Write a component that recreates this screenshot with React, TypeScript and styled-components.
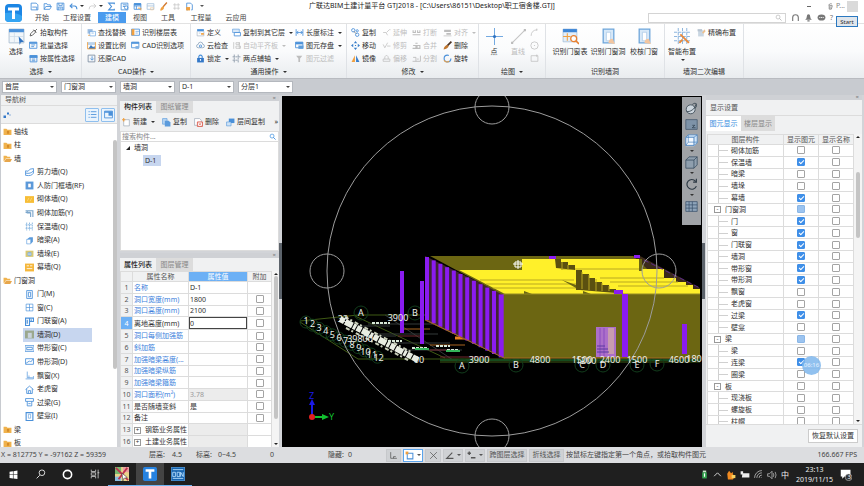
import React from 'react';
import styled, { createGlobalStyle, css } from 'styled-components';

const BLUE = '#4a90d9';
const ORANGE = '#f0a040';
const LINE = '#dcdcdc';

const GlobalStyle = createGlobalStyle`
  * { box-sizing: border-box; }
  html, body, #root { height: 100%; margin: 0; }
  body, button, input, select, table {
    font-family: "Noto Sans", "Noto Sans CJK SC", sans-serif;
    font-size: 7px;
    line-height: 10px;
    color: #303030;
  }
  body { overflow: hidden; }
  button { border: 0; padding: 0; margin: 0; background: none; }
  input { margin: 0; }
  p, h1, h2, ul { margin: 0; padding: 0; font-size: inherit; font-weight: normal; list-style: none; }
`;

/* ---------- icons ---------- */

const b = { fill: 'none', stroke: BLUE, strokeWidth: 1.5 };
const o = { fill: 'none', stroke: ORANGE, strokeWidth: 1.5 };
const g = { fill: 'none', stroke: 'currentColor', strokeWidth: 1.3 };

const glyphs: Record<string, React.ReactNode> = {
  newFile: <><path d="M2 7V2h9l3 3v9M2 7v7h12M4 9h8v5" {...b} /></>,
  open: <path d="M2 13V3h5l1 2h5v3M2 13l3-5h10l-3 5z" {...b} />,
  save: <path d="M2 2h12v12H2zM5 2v4h6V2M4 14V9h8v5M6 11h4" {...b} />,
  undo: <path d="M6 3 2 7l4 4M2 7h8q4 0 4 6" {...b} strokeWidth={2} />,
  redo: <path d="m10 3 4 4-4 4M14 7H6q-4 0-4 6" fill="none" stroke="#c8c8c8" strokeWidth="1.5" />,
  sigma: <path d="M13 4V2H3l5 6-5 6h10v-2" {...b} strokeWidth={2} />,
  stats: <><path d="M2 2v12h12V2zM5 5h7M5 8h4" {...b} /><circle cx="11" cy="10" r="3" {...b} /></>,
  sheet: <><path d="M2 3h12v10H2zM2 7h12M6 7v6" {...b} /><path d="M2 2h12v4H2z" fill={BLUE} /><path d="M9 11h5v4" {...o} /></>,
  sheetPale: <><path d="M2 3h12v10H2zM2 7h12" fill="none" stroke="#a9c3dc" strokeWidth="1.5" /><path d="M8 10h5v4H8z" fill="none" stroke="#edc79c" /></>,
  brush: <><path d="M14 1 7 9" stroke="#d07830" strokeWidth="2.5" /><path d="M8 8q-5 0-6 7 6 0 7-5z" fill={ORANGE} /></>,
  brushDark: <><path d="M15 1 7 9" stroke="#4a3020" strokeWidth="3" /><path d="M8 7q-6 1-7 8 8-1 9-6z" fill="#c0762e" /></>,
  grid: <path d="M2 5h12M2 11h12M5 2v12M11 2v12" fill="none" stroke="#b8b8b8" />,
  lockDoc: <><path d="M5 14H3V2h7l3 3v9h-2" {...b} /><path d="M2 9h7v6H2z" fill={ORANGE} /></>,
  picker: <path d="m2 14 1-4 6-6 3 3-6 6zM8 3l5 5M11 5l3-3" fill="none" stroke="#555" strokeWidth="1.6" />,
  batch: <><path d="M1 2h13v11H1zM4 7h7M4 10h5" {...b} /><path d="M1 2h13v3H1z" fill={BLUE} /></>,
  prop: <><path d="M2 3h12v11H2zM5 9h6M5 12h6" {...b} /><path d="M1 2h14v5H1z" fill={BLUE} /></>,
  find: <><path d="M1 2h9v8H1z" fill="#9bbce0" /><path d="M5 6h10v8H5zM8 9h4" fill="#fff" stroke={BLUE} /><path d="M2 13h3" {...o} /></>,
  scale: <><path d="M1 2h14v5H1z" fill="#b9d2ec" /><path d="m2 14 5-7 4 4 2-2 2 5z" fill="#3a78c0" /><path d="M1 2v12h14V2" {...o} /></>,
  restore: <><path d="M2 2h12v12H2z" fill="none" stroke="#7b8ca0" strokeWidth="1.5" /><path d="M9 4v6M6 8l3 3 3-3" {...b} /></>,
  floors: <><path d="M1 2h14v11H1z" {...b} /><path d="M1 2h5v11H1z" fill={ORANGE} /><path d="M8 6h6M8 9h4" stroke={BLUE} /></>,
  option: <><path d="M1 2h13v10H1z" {...b} /><path d="M1 2h13v3H1z" fill={BLUE} /><path d="M8 9h6v5H8z" fill="#7fb0e3" /></>,
  define: <><path d="M2 2h12v4H2z" fill={BLUE} /><path d="M2 6v8h12V6M5 9h3" fill="none" stroke="#9aa8b8" /><path d="M9 9h5v3H9z" fill={ORANGE} /></>,
  cloud: <><path d="M4 12a3 3 0 0 1 0-6 4 4 0 0 1 8 0 3 3 0 0 1 0 6z" fill="none" stroke="#92a8bf" strokeWidth="1.5" /><circle cx="8" cy="9" r="2" {...b} /></>,
  lock: <><path d="M5 7V4q3-4 6 0v3" {...b} strokeWidth={2} /><path d="M2 7h12v8H2z" fill="#3478c8" /><path d="M8 9v3" stroke="#fff" strokeWidth="2" /></>,
  copyLayer: <><path d="M1 2h12v6H1z" fill="#d8e8f8" stroke={BLUE} /><path d="M4 8h11v6H4z" fill="#fff" stroke={BLUE} strokeWidth="1.5" /></>,
  align: <path d="M3 2v12M7 3h6v3H7zM7 9h8v4H7zM13 2v12" {...g} />,
  axis: <path d="M4 1v14M11 1v14M1 5h14M1 11h9" fill="none" stroke="#8795a5" strokeWidth="1.5" strokeDasharray="4 1" />,
  length: <><path d="M2 2v12M14 2v12" {...b} /><path d="M3 8h10M6 5 3 8l3 3M10 5l3 3-3 3" {...b} /></>,
  store: <><path d="M1 2h13v10H1z" {...b} /><path d="M1 2h13v4H1z" fill={BLUE} /><path d="M6 8h9v6H6z" fill="#5d9ddc" /></>,
  filter: <path d="M2 3h11L9 8v6H6V8z" fill="currentColor" />,
  copy: <><circle cx="4" cy="4" r="3" {...b} /><circle cx="11" cy="5" r="2" {...b} /><circle cx="11" cy="12" r="3" {...b} /><path d="m5 6 4 4" stroke="#333" /></>,
  move: <path d="M8 0 5 4h6zM8 16l3-4H5zM0 8l4-3v6zM16 8l-4-3v6zM7 7h2v2H7z" fill="#3a7fca" />,
  mirror: <><path d="M7 2v12H1z" fill={ORANGE} /><path d="M9 2v12h6z" fill="#3a7fca" /></>,
  extend: <path d="M2 8h5l3 5M8 8l5-5h2" {...g} />,
  trim: <path d="M2 6l3 6 5-9M9 9h6" {...g} />,
  offset: <path d="M2 13h12v-4H2zM5 9V5l3-3 3 3v4" {...g} />,
  breakIt: <path d="M2 4v4h4V4M10 4v4h4V4M1 12h14" {...g} strokeWidth={2} />,
  merge: <path d="M1 13h14M2 8h5v5M9 13V8h5v5M6 4h4" {...g} strokeWidth={2} />,
  split: <path d="M1 13h14V3M2 6h5v7M9 9h3" {...g} strokeWidth={1.6} />,
  alignTo: <><path d="M2 3h12v4H2zM6 9h8v3H6z" fill="currentColor" /><path d="M1 14h14" {...g} /></>,
  rotate: <><circle cx="8" cy="8" r="6" {...b} strokeWidth={2} strokeDasharray="30 8" /><path d="M2 11a6 6 0 0 0 9 2" {...o} strokeWidth={2} /></>,
  exact: <><path d="M2 4h10v11H2z" fill="#c9d6e2" /><path d="M1 2h8v4H1z" fill="#b7c4d0" /><path d="m9 8 5-6 1 4-4 4z" fill="#eec08c" /></>,
  arc: <path d="M2 14Q2 4 13 3M12 1v4" {...g} />,
  circle: <><circle cx="8" cy="8" r="6.5" {...g} /><path d="M7 8h2" {...g} /></>,
  rect: <path d="M2 3h12v10H2zM12 1v4" {...g} />,
  list: <path d="M1 3h2M5 3h10M1 8h2M5 8h10M1 13h2M5 13h10" {...b} />,
  cards: <><path d="M1 2h14v12H1z" {...b} /><path d="M1 2h14v3H1zM8 5h7v5H8z" fill={BLUE} /></>,
  jump: <path d="M1 9h5v5H1zM8 3h4v4H8zM13 7h2v2h-2z" fill="#3478c8" />,
  folder: <><path d="M1 3h5l2 2h7v9H1z" fill="#f0b24d" /><path d="M7 7h4v5H7z" fill="#d58b28" /></>,
  folderOpen: <><path d="M1 3h5l2 2h5v3H5l-3 5H1z" fill="#f0b24d" /><path d="M5 9h11l-3 5H2z" fill="#e7a64b" /></>,
  shear: <path d="M1 5q5 3 8-3l6-1v8q-3 6-14 4zM1 9q9 2 14-4" {...b} />,
  frame: <><path d="M1 1h14v14H1z" fill="#5b9bdc" /><path d="M5 4h6v8H5z" fill="#fff" stroke="#3a78c0" /></>,
  brick: <><path d="M0 2h16v12H0z" fill="#f7bd35" /><path d="M4 11 7 5M9 11l3-6" stroke="#fbe2a0" /></>,
  rebar: <path d="M1 3h13v11M4 3v4h6v7M1 6h9" fill="none" stroke="#7ba6cc" strokeWidth="2" />,
  insul: <path d="M3 1v14M8 1v14M13 1v14M1 5h12M1 11h12" fill="none" stroke="#7aaede" strokeDasharray="3 1" strokeWidth="1.5" />,
  beam: <><path d="M3 6 8 2h6v8l-4 4V6z" fill="#5b9bdc" /><path d="M3 6h7v8H3z" fill="#fff" stroke={BLUE} /></>,
  stack: <><path d="M1 3h14v11H1z" fill="#d7c873" /><circle cx="8" cy="9" r="4" fill="#8fb6d6" /><path d="M5 9h6" stroke="#fff" /></>,
  curtain: <><path d="M0 1h16v14H0z" fill="#f5b73c" /><path d="M3 5h4M9 5h4M3 10h10" stroke="#fff" strokeWidth="1.5" /></>,
  door: <path d="M3 1h10v14H3zM6 4h4v8H6z" {...b} />,
  window: <path d="M2 2h12v12H2zM8 2v12M2 8h12" {...b} strokeWidth={1.2} />,
  doorWin: <path d="M1 2h7v13H1zM8 2h7v6H8M4 5v7M11 4v3" {...b} strokeWidth={2} />,
  hole: <><path d="M0 1h16v14H0z" fill="#9ba88e" /><path d="M5 5h7v9H5z" fill="#c9d3dd" /></>,
  band: <path d="M0 3h16v10H0zM3 6h10v4H3z" {...b} />,
  bandHole: <path d="M1 3h14v10H1zM2 11l6-4 2 2 5-6" {...b} />,
  bay: <path d="M4 1v11h10M1 14h14V9M7 12V8" {...b} strokeWidth={1.2} />,
  dormer: <path d="M1 8l7-6 7 6M3 7v8h10V7M6 15v-5h4v5" {...b} />,
  lintel: <path d="M1 1h14v5H1zM4 6v8h8V6M6 10h4" {...b} />,
  niche: <><path d="M2 1h12v14H2z" {...b} strokeWidth={2} /><path d="M6 4h4v7H6z" fill="none" stroke={BLUE} /></>,
  add: <><path d="M3 3h10v11H3z" fill="#fff" stroke="#8a98a8" /><path d="M0 3h6M3 0v6" stroke={ORANGE} strokeWidth="2" /></>,
  dup: <><path d="M1 1h8v10H1z" fill="#b9d6f2" stroke={BLUE} /><path d="M5 5h7l3 3v7H5z" fill="#5b9bdc" /></>,
  del: <><path d="M1 1h9l3 3v9H1z" fill="#fff" stroke="#8a98a8" /><path d="M6 7h9v8H6z" fill="#fff" stroke="#d85040" strokeWidth="1.5" /><path d="m8 9 5 4M13 9l-5 4" stroke="#d85040" /></>,
  layerCopy: <><path d="M5 1h10v8H5z" fill="#4a90d9" /><path d="M1 7h8v7H1z" fill="#cfe3f6" stroke={BLUE} /></>,
  search: <><circle cx="7" cy="7" r="4.5" {...g} strokeWidth={1.6} /><path d="m10 10 5 5" {...g} strokeWidth={2} /></>,
  headset: <path d="M3 13V8a5 5 0 0 1 10 0v5M3 9v5M13 9v5" {...g} strokeWidth={2} />,
  bell: <path d="M2 12q3-2 3-6 0-4 3-4t3 4q0 4 3 6zM6 13h4v2H6z" fill="currentColor" />,
  chat: <><ellipse cx="8" cy="8" rx="7" ry="5.5" fill="currentColor" /><path d="M4 8h8" stroke="#fff" strokeWidth="1.5" strokeDasharray="2 1" /></>,
  shirt: <path d="M3 5q5-5 8-3M5 6h7l-2 8H5zM7 8v5" {...g} strokeWidth={2} />,
  corner: <path d="M3 2v11h11M8 13v-3h4" {...g} />,
  square: <><path d="M4 4h10v10H4z" {...b} strokeWidth={1.8} /><path d="M1 1h5v5H1z" fill={ORANGE} /></>,
  cross: <path d="M2 2l12 12M14 2 2 14" {...g} />,
  angle: <path d="M13 3 3 13h12" {...g} strokeWidth={2} />,
  plusMinus: <path d="M1 4h6M4 1v6M7 12h8" {...g} strokeWidth={2.4} />,
  windows: <path d="m1 3 6-1v6H1zM8 2l7-1v7H8zM1 9h6v6l-6-1zM8 9h7v7l-7-1z" fill="#fff" />,
  lens: <path d="M14 6a4.500 4.500 0 1 1-9 0 4.500 4.500 0 0 1 9 0M6 10l-5 5" fill="none" stroke="#fff" strokeWidth="1.3" />,
  ring: <circle cx="8" cy="8" r="6" fill="none" stroke="#fff" strokeWidth="2.300" />,
  taskView: <path d="M2 1v3h7V1M2 15v-3h7v3M2 6h7v4H2zM13 1v14M12 6h3" fill="none" stroke="#ddd" strokeWidth="1.200" />,
  map: <><path d="M0 0h16v16H0z" fill="#e9d38a" /><path d="M0 0h7v8H0z" fill="#77b56e" /><path d="M9 0h7v6H9z" fill="#e9a0a0" /><path d="M0 11h7v5H0z" fill="#88bce0" /><path d="m1 1 14 14M14 1 4 14" stroke="#c03050" strokeWidth="2" /><path d="m8 7 6 5-4 1-1 3z" fill="#fff" stroke="#444" strokeWidth=".7" /></>,
  appT: <><rect width="16" height="16" rx="2" fill="#2682e0" /><path d="M3 4h10M8 4v9" stroke="#fff" strokeWidth="3" /></>,
  recorder: <><rect width="16" height="16" rx="2" fill="#1763ae" stroke="#6fb4ee" /><path d="M2 6h3v5H2zM7 6h3v5H7zM11 11V6l3 5V6M2 3h12M2 13h12" fill="none" stroke="#b9e0ff" /></>,
  usb: <><path d="M4 4h8v11H4z" fill="#36a852" /><path d="M5 1h6v3H5z" fill="#c8e8c8" /><path d="M8 6v6" stroke="#fff" strokeWidth="2" /></>,
  chevron: <path d="m2 11 6-6 6 6" fill="none" stroke="#eee" strokeWidth="1.500" />,
  fox: <><path d="M2 6 5 1l3 4 3-2v4l4 2-4 6H3z" fill="#f08a20" /><path d="M9 8h6v5H9z" fill="#f7d060" /></>,
  battery: <path d="M4 5h11v7H3zM1 2h4v5H1z" fill="#eee" />,
  wifi: <path d="M1 14A13 13 0 0 1 14 1M5 14a9 9 0 0 1 9-9M9 14a5 5 0 0 1 5-5M13 14v-1" fill="none" stroke="#ccc" strokeWidth="1.300" />,
  speaker: <path d="M1 6h3l4-4v12L4 10H1zM10 5q2 3 0 6M13 3q3 5 0 10" fill="none" stroke="#ddd" />,
  notify: <><path d="M1 1h13v9H6l-3 3v-3H1z" fill="#fff" /><circle cx="11.500" cy="11" r="4.500" fill="#333" stroke="#ddd" strokeWidth=".7" /></>,
  bigSelect: <><path d="M1 1h14v13H1z" fill="#f2f6fa" stroke="#a8bccf" strokeWidth=".8" /><path d="M1 1h14v3H1z" fill={BLUE} /><path d="M6 4v10M1 8h14" stroke="#c8d6e4" strokeWidth=".6" /><path d="m10 8 5 5-3 .3L11 16z" fill="#2f72c0" /></>,
  point: <><path d="M8 0v16M0 8h16" stroke="#5b9bdc" strokeWidth=".8" /><circle cx="8" cy="8" r="1.500" fill="#2f72c0" /></>,
  line: <><path d="M2 14 14 2" stroke="#c4c4c4" /><path d="M1 13h2v2H1zM13 1h2v2h-2z" fill="#bbb" /></>,
  doorTable: <><path d="M1 1h13v12H1z" fill="#e3eef8" stroke="#9fbcd8" strokeWidth=".7" /><path d="M1 1h13v3H1z" fill="#3d86d6" /><path d="M1 8h7M5 5v7" stroke={ORANGE} /><circle cx="11" cy="10" r="2.800" fill="#fff" stroke="#e88030" strokeWidth="1.200" /><path d="m13 12 3 3" stroke="#e88030" strokeWidth="1.500" /></>,
  doorHole: <><path d="M3 1h10v13H3z" fill="#d8e9f8" stroke="#6da5da" strokeWidth="1.200" /><path d="M6 4h4v8H6z" fill="#fff" stroke="#9fc2e2" strokeWidth=".6" /><path d="M8 14q0-4 4-4l2 5z" fill="#f3c6a0" /></>,
  smart: <><path d="M4 0v16M8 0v16M12 0v16M0 4h16M0 8h16M0 12h16" stroke="#7aa9d8" strokeWidth=".8" strokeDasharray="3 1" /><path d="m6 6 8 8M8 11l-3 3" stroke="#e88a3c" strokeWidth="1.800" /></>,
  orbit: <><circle cx="7" cy="9" r="5.500" fill="#cdd6de" stroke="#34424e" /><path d="M2 12q9 0 12-10M9 3q4-3 5 0t-2 5" fill="none" stroke="#34424e" /></>,
  twoD: <><path d="M1 2h14v12H1z" fill="#7e93a8" stroke="#40546a" strokeWidth=".9" /><path d="M9 9h3l-3 3h4" fill="none" stroke="#20303e" strokeWidth=".8" /></>,
  cubeLit: <><path d="M1 4 4 1h11v10l-4 4H1z" fill="#cfe4f8" /><path d="M1 4h10v10H1z" fill="#f4f9ff" stroke="#3c78b8" /><path d="m1 4 3-3h11v10l-4 3M11 4l4-3M4 1v9h11M4 10l-3 4" fill="none" stroke="#3c78b8" strokeWidth=".8" /></>,
  cube: <path d="M1 5h10v10H1zM1 5l4-4h10v10l-4 4M11 5l4-4" fill="#8f9fae" stroke="#33475a" strokeWidth=".9" />,
  refresh: <path d="M13 4A6 6 0 1 0 14 10M14 1v4h-4" fill="none" stroke="#2c3944" strokeWidth="1.400" />,
  tableView: <path d="M1 2h14v12H1zM1 6h14M1 10h14M5 2v12M9 2v12" fill="#8ea4ba" stroke="#38506a" strokeWidth=".9" />,
};

const Svg = styled.svg<{ $size: number }>`
  flex: none;
  display: block;
  width: ${p => p.$size}px;
  height: ${p => p.$size}px;
`;
const Icon = ({ name, size = 9 }: { name: string; size?: number }) => (
  <Svg $size={size} viewBox="0 0 16 16" aria-hidden="true">{glyphs[name]}</Svg>
);

const Caret = styled.span`
  flex: none;
  border: 2px solid transparent;
  border-top-color: currentColor;
  border-bottom: 0;
  margin-left: 2px;
`;

/* ---------- header ---------- */

const Page = styled.div`
  height: 100vh;
  display: flex;
  flex-direction: column;
  background: #fff;
  white-space: nowrap;
`;
const Header = styled.header`
  position: relative;
  flex: none;
  display: grid;
  grid-template-columns: 28px 1fr;
  height: 23px;
  background: #fff;
`;
const Logo = styled.svg`
  width: 17px;
  height: 18px;
  margin: 4px 0 0 5px;
`;
const HeaderRow = styled.div`
  display: flex;
  align-items: center;
  height: 12px;
  & + & { height: 11px; }
`;
const QuickTools = styled.nav`
  display: flex;
  align-items: center;
  gap: 4px;
  width: 281px;
  padding-left: 2px;
  color: #555;
`;
const QuickButton = styled.button`
  display: flex;
  align-items: center;
`;
const Title = styled.h1`
  flex: 1;
  color: #222;
`;
const WindowTools = styled.div`
  display: flex;
  align-items: center;
  gap: 2px;
  padding-right: 6px;
  color: #888;
`;
const Dash = styled.span`
  width: 4px;
  height: 1px;
  background: #666;
  margin-right: 14px;
`;
const Avatar = styled.span`
  width: 11px;
  height: 11px;
  background: #dadada;
`;
const Tabs = styled.nav`
  display: flex;
  flex: 1;
  height: 11px;
`;
const RibbonTab = styled.button<{ $active?: boolean; $width: number }>`
  width: ${p => p.$width}px;
  height: 11px;
  color: ${p => (p.$active ? '#fff' : '#444')};
  background: ${p => (p.$active ? '#4a9bee' : 'transparent')};
`;
const SearchHelp = styled.label`
  display: flex;
  align-items: center;
  width: 138px;
  height: 10px;
  padding-right: 3px;
  border: 1px solid #d4d4d4;
  background: #fff;
  color: #b8b8b8;
`;
const HelpInput = styled.input`
  flex: 1;
  min-width: 0;
  height: 8px;
  border: 0;
  background: transparent;
`;
const HelpTools = styled.div`
  display: flex;
  align-items: center;
  gap: 4px;
  padding: 0 31px 0 5px;
  color: #777;
`;
const StartButton = styled.button`
  position: absolute;
  right: 6px;
  top: 16px;
  width: 22px;
  height: 11px;
  border: 1px solid #2a78c0;
  background: #e0e6ec;
  font-size: 6px;
  line-height: 8px;
`;

/* ---------- ribbon ---------- */

const Ribbon = styled.section`
  flex: none;
  display: flex;
  height: 56px;
  border-top: 1px solid #e2e2e2;
  border-bottom: 1px solid #b8bbc0;
  background: linear-gradient(#ffffff, #fafbfc 50%, #e9ecef);
`;
const Group = styled.div<{ $width: number }>`
  display: flex;
  flex-direction: column;
  width: ${p => p.$width}px;
  border-right: 1px solid #dfe2e6;
  padding-top: 2px;
`;
const GroupBody = styled.div<{ $pad: number }>`
  display: flex;
  height: 39px;
  padding-left: ${p => p.$pad}px;
`;
const GroupName = styled.p`
  display: flex;
  align-items: center;
  justify-content: center;
  gap: 2px;
  height: 13px;
`;
const Stack = styled.div<{ $width: number }>`
  width: ${p => p.$width}px;
`;
const Tool = styled.button<{ $muted?: boolean }>`
  display: flex;
  align-items: center;
  gap: 2px;
  height: 13px;
  color: ${p => (p.$muted ? '#bdbdbd' : '#303030')};
`;
const BigTool = styled.button<{ $width: number; $muted?: boolean }>`
  display: flex;
  flex-direction: column;
  align-items: center;
  gap: 2px;
  width: ${p => p.$width}px;
  padding-top: 2px;
  color: ${p => (p.$muted ? '#bdbdbd' : '#303030')};
`;

type ToolDef = [icon: string, label: string, opt?: string];
const ToolStack = ({ width, items }: { width: number; items: ToolDef[] }) => (
  <Stack $width={width}>
    {items.map(([icon, label, opt = '']) => (
      <Tool key={icon} $muted={opt.includes('m')} aria-label={label || icon}>
        <Icon name={icon} />
        {label}
        {opt.includes('v') && <Caret />}
      </Tool>
    ))}
  </Stack>
);

/* ---------- selectors ---------- */

const SelectorBar = styled.div`
  flex: none;
  display: flex;
  align-items: center;
  gap: 4px;
  height: 16px;
  padding: 0 2px;
  background: #c8cbd0;
`;
const SelectBox = styled.span`
  position: relative;
  display: flex;
  width: 55px;
  &::after {
    content: '';
    position: absolute;
    right: 3px;
    top: 5px;
    border: 2px solid transparent;
    border-top-color: #444;
    border-bottom: 0;
  }
`;
const Select = styled.select`
  appearance: none;
  width: 100%;
  height: 12px;
  border: 1px solid #b4b8be;
  border-radius: 0;
  background: #fff;
  padding: 0 2px;
`;

/* ---------- panels ---------- */

const Main = styled.main`
  flex: 1;
  min-height: 0;
  display: grid;
  grid-template-columns: 117px 163px 1fr 162px;
  background: #c8cbd0;
`;
const Column = styled.section`
  display: flex;
  flex-direction: column;
  min-height: 0;
  min-width: 0;
  background: #f0f1f2;
`;
const NavColumn = styled(Column)`
  border-left: 1px solid #c8cbd0;
`;
const MiddleColumn = styled(Column)`
  background: #d2d4d8;
  padding: 1px 1px 0 3px;
  gap: 2px;
`;
const RightColumn = styled(Column)`
  position: relative;
  border-left: 4px solid #d2d4d8;
  border-right: 2px solid #d2d4d8;
`;
const PanelTitle = styled.h2<{ $height: number }>`
  flex: none;
  display: flex;
  align-items: center;
  height: ${p => p.$height}px;
  padding-left: 4px;
  color: #555;
  border-bottom: 1px solid ${LINE};
`;
const NavTools = styled.div`
  flex: none;
  display: flex;
  align-items: center;
  gap: 2px;
  height: 18px;
  padding: 0 2px;
  border-bottom: 1px solid ${LINE};
`;
const Spacer = styled.span`
  flex: 1;
`;
const SquareButton = styled.button`
  display: flex;
  align-items: center;
  justify-content: center;
  width: 14px;
  height: 14px;
  border: 1px solid #8fbfee;
  border-radius: 1px;
  background: #eaf4fd;
`;
const Scroll = styled.div`
  flex: 1;
  min-height: 0;
  display: flex;
  overflow: hidden;
  background: #fff;
`;
const Tree = styled.ul`
  flex: 1;
  display: grid;
  grid-auto-rows: 1fr;
  height: calc(100% + 3px);
  padding-top: 1px;
`;
const TreeRow = styled.li<{ $child?: boolean; $selected?: boolean }>`
  display: flex;
  align-items: center;
  gap: ${p => (p.$child ? 3 : 2)}px;
  min-height: 0;
  margin-left: ${p => (p.$child ? 22 : 2)}px;
  margin-right: 20px;
  padding-left: ${p => (p.$child ? 2 : 0)}px;
  background: ${p => (p.$selected ? '#c7d6ef' : 'transparent')};
`;
const ScrollTrack = styled.div<{ $arrows?: boolean }>`
  position: relative;
  flex: none;
  width: ${p => (p.$arrows ? 8 : 5)}px;
  background: ${p => (p.$arrows ? '#f4f4f4' : '#fff')};
  ${p => p.$arrows && css`
    &::before, &::after {
      content: '';
      position: absolute;
      left: 2px;
      border: 2px solid transparent;
    }
    &::before { top: 0; border-bottom-color: #222; }
    &::after { bottom: 0; border-top-color: #222; }
  `}
`;
const Thumb = styled.div<{ $top: number; $height: number }>`
  width: 4px;
  margin: 0 auto;
  border-radius: 2px;
  background: #c4c4c4;
  height: ${p => p.$height}%;
  position: relative;
  top: ${p => p.$top}%;
`;
const Card = styled.div<{ $grow: number }>`
  display: flex;
  flex-direction: column;
  flex: ${p => p.$grow} 1 0;
  min-height: 0;
  background: #f0f1f2;
`;
const Grip = styled.div`
  flex: none;
  height: 5px;
  background: #cfd1d5;
  color: #777;
  font-size: 6px;
  line-height: 5px;
  text-align: right;
  padding-right: 3px;
`;
const PanelTabs = styled.div<{ $height: number }>`
  flex: none;
  display: flex;
  height: ${p => p.$height}px;
`;
const PanelTab = styled.button<{ $active?: boolean; $accent?: boolean; $width: number }>`
  width: ${p => p.$width}px;
  height: 100%;
  color: ${p => (p.$active ? (p.$accent ? '#3a8ee0' : '#222') : '#888')};
  background: ${p => (p.$active ? (p.$accent ? '#fff' : '#f0f1f2') : '#dcdcdc')};
  font-weight: ${p => (p.$active && !p.$accent ? 500 : 400)};
`;
const ListTools = styled.div`
  flex: none;
  display: flex;
  align-items: center;
  gap: 7px;
  height: 18px;
  padding: 0 1px 0 2px;
`;
const MoreButton = styled.button`
  margin-left: -7px;
`;
const SearchRow = styled.label`
  flex: none;
  display: flex;
  align-items: center;
  height: 11px;
  background: #fff;
  border: 1px solid ${LINE};
  padding-right: 2px;
  color: #3a8ee0;
`;
const SearchInput = styled.input`
  flex: 1;
  min-width: 0;
  height: 9px;
  border: 0;
  padding: 0 1px;
  &::placeholder { color: #888; }
`;
const Parts = styled.ul`
  flex: 1;
  background: #fff;
  border: 1px solid ${LINE};
  border-top: 0;
`;
const Part = styled.li<{ $indent: number }>`
  display: flex;
  align-items: center;
  gap: 4px;
  height: 12px;
  padding-left: ${p => p.$indent}px;
`;
const Expander = styled.span`
  border: 2px solid transparent;
  border-right-color: #222;
  border-bottom-color: #222;
`;
const Chosen = styled.span`
  padding: 0 5px 0 2px;
  line-height: 11px;
  background: #c7d6ef;
`;

/* ---------- tables ---------- */

const Table = styled.table<{ $extra: number }>`
  flex: 1;
  width: 0;
  min-width: 0;
  height: calc(100% + ${p => p.$extra}px);
  table-layout: fixed;
  border-collapse: collapse;
  background: #fff;
  line-height: 9px;
`;
const Th = styled.th<{ $blue?: boolean }>`
  padding: 0;
  border: 1px solid ${LINE};
  font-weight: 400;
  color: ${p => (p.$blue ? '#fff' : '#555')};
  background: ${p => (p.$blue ? '#6cb0f5' : '#f0f1f2')};
`;
const Td = styled.td<{ $tone?: 'head' | 'active' | 'link' | 'off' | 'plain' }>`
  padding: 0 1px;
  border: 1px solid ${LINE};
  overflow: hidden;
  ${p => p.$tone === 'head' && css`background: #f0f1f2; text-align: center; color: #555;`}
  ${p => p.$tone === 'active' && css`background: #6cb0f5; text-align: center; color: #fff;`}
  ${p => p.$tone === 'link' && css`color: #3d7fdc;`}
  ${p => p.$tone === 'off' && css`background: #ececec; color: #999;`}
`;
const CheckCell = styled.td`
  padding: 0;
  border: 1px solid ${LINE};
  text-align: center;
`;
const Check = styled.input<{ $partial?: boolean }>`
  appearance: none;
  display: block;
  position: relative;
  width: 8px;
  height: 8px;
  margin: 0 auto;
  border: 1px solid #a4a4a4;
  border-radius: 1px;
  background: #fff;
  ${p => p.$partial && css`background: #9cc4f0; border-color: #8ab6e6;`}
  &:checked { background: #3f8fe8; border-color: #3f8fe8; }
  &:checked::before {
    content: '';
    position: absolute;
    left: 2px;
    top: 0;
    width: 2px;
    height: 4px;
    border: solid #fff;
    border-width: 0 1px 1px 0;
    transform: rotate(45deg);
  }
`;
const ValueInput = styled.input<{ $boxed?: boolean }>`
  display: block;
  width: 100%;
  height: ${p => (p.$boxed ? 10 : 9)}px;
  border: 0;
  padding: 0;
  background: transparent;
  line-height: 9px;
  color: inherit;
  ${p => p.$boxed && css`outline: 1px solid #444; background: #fff;`}
`;
const PlusBox = styled.button`
  width: 7px;
  height: 7px;
  margin: 0 4px 0 0;
  border: 1px solid #999;
  background: #fff;
  font-size: 6px;
  line-height: 5px;
  vertical-align: middle;
`;
const LayerName = styled.td<{ $child?: boolean }>`
  position: relative;
  padding: 0 0 0 ${p => (p.$child ? 23 : 6)}px;
  border: 1px solid ${LINE};
  ${p => p.$child && css`
    &::before {
      content: '';
      position: absolute;
      left: 10px;
      top: 0;
      width: 9px;
      height: 50%;
      border: solid #d0d0d0;
      border-width: 0 0 1px 1px;
    }
    &::after {
      content: '';
      position: absolute;
      left: 10px;
      top: 50%;
      bottom: 0;
      border-left: 1px solid #d0d0d0;
    }
  `}
`;
const TableArea = styled(Scroll)`
  margin: 3px 0 0 1px;
`;
const PanelFoot = styled.div`
  flex: none;
  display: flex;
  align-items: center;
  justify-content: flex-end;
  height: 23px;
  padding-right: 4px;
  border-top: 1px solid ${LINE};
`;
const FootButton = styled.button`
  width: 50px;
  height: 14px;
  border: 1px solid #ccc;
  background: #fff;
`;
const Ball = styled.div`
  position: absolute;
  left: 96px;
  bottom: 72px;
  width: 19px;
  height: 19px;
  border-radius: 50%;
  background: rgba(126, 182, 236, 0.85);
  color: #e8f4ff;
  font-size: 6px;
  line-height: 19px;
  text-align: center;
`;

/* ---------- viewport ---------- */

const Viewport = styled.section`
  position: relative;
  min-width: 0;
  min-height: 0;
  border: solid #d2d4d8;
  border-width: 1px 0 0 2px;
  background: #000;
`;
const Canvas = styled.svg`
  display: block;
  width: 100%;
  height: 100%;
  overflow: hidden;
  font-family: "Noto Sans", sans-serif;
  font-size: 9px;
`;
const ViewTools = styled.div`
  position: absolute;
  right: 1px;
  top: 1px;
  display: flex;
  flex-direction: column;
  align-items: center;
  gap: 3px;
  width: 19px;
  height: 128px;
  padding-top: 5px;
  background: #a0a3a7;
`;
const ViewButton = styled.button<{ $menu?: boolean }>`
  position: relative;
  ${p => p.$menu && css`
    margin-bottom: 6px;
    &::after {
      content: '';
      position: absolute;
      left: 5px;
      bottom: -5px;
      border: 2px solid transparent;
      border-top-color: #333;
      border-bottom: 0;
    }
  `}
`;
const CollapseHandle = styled.button<{ $side: 'left' | 'right' }>`
  position: absolute;
  ${p => p.$side}: -3px;
  top: 42%;
  z-index: 1;
  width: 3px;
  height: 56px;
  background: #5c636b;
`;

const PURPLE = '#8a1cf0';
const OLIVE = '#6c6612';
const YELLOW = '#fff02a';

const Scene = () => (
  <Canvas viewBox="282 96 420 351" preserveAspectRatio="xMidYMid slice" role="img" aria-label="三维视图">
    <g stroke="#3f5a14" fill="none">
      <path d="M300 321 358 315H425M300 322l58 37h342M355 316l90 42M440 362h260" />
      <path d="M385 315l68 45M368 324h65M378 334h60M390 343h60M402 350h60M350 326h40M360 336h36" stroke="#343a3a" />
      <path d="M425 320l80 38M400 329h30M430 345h35" stroke="#a96520" />
      <path d="M398 336h22M430 350h20M440 357h50" stroke="#742b30" />
      <path d="M440 360h260" stroke="#164b1e" strokeWidth="2" />
    </g>
    <g fill="none" stroke="#123d1c">
      {Array.from({ length: 12 }, (_, i) => <circle key={i} cx={306 + i * 6.5} cy={322 + i * 3.2} r="6" />)}
      {[[361, 313], [415, 313], [462, 366], [516, 365], [582, 365], [603, 365], [637, 365], [657, 364]].map(([x, y]) => (
        <circle key={x} cx={x} cy={y} r="7" />
      ))}
    </g>
    <path d="M340 319l78 41" stroke="#e9ede2" strokeWidth="6" strokeDasharray="5 1 8 1 3 1" />
    <path d="M345 317l66 35M346 328l62 32" stroke="#c8ceb9" strokeWidth="2" strokeDasharray="4 2 2 3" />
    <path d="M372 323h18M412 348h15M436 346h14M447 350h12M388 341h14" stroke="#d8e8d8" strokeWidth="2" strokeDasharray="3 1" />
    <path d="M415 349h14M446 351h14" stroke="#35b45a" strokeWidth="2" />
    <path d="M455 338h10" stroke="#e88020" strokeWidth="3" />

    <path d="M425 256 503 294v64l-78-38z" fill="#402430" />
    <path d="M430 256h208l62 33v6H503z" fill={OLIVE} />
    <path d="M633 256h7l60 32v6l-43-16z" fill="#3b2a1a" />
    <path d="M459 270h63v-11h117v10h25v9h12v4h10v3h7v4h7v5H505z" fill={YELLOW} />
    <path d="M480 280h94M486 284h90M493 288h84M600 278h64M610 282h68M618 286h70M561 269h80" stroke="#b9a820" strokeWidth="1" fill="none" />
    <path d="M555 259h6v3h7v3h7v5h7v4h7v4h6v4h7v3h7v4h7v4l-36-3h-4v-20l-20-2z" fill="#5b5010" />
    <path d="M562 262v8M568 265v5M582 272v17M589 275v15M596 279v12M602 283v8M609 286v5" stroke="#b8a423" strokeWidth="1" />
    <path d="M562 280l14 5v3zM583 291l8 3h-8zM524 291l8 3h-8z" fill={OLIVE} />
    <path d="M639 259h3v12h-3z" fill={OLIVE} />
    <path d="M503 294h197v64H503z" fill={OLIVE} />
    <path d="M503 294h197" stroke="#948b22" strokeWidth="1" />
    <g fill={PURPLE}>
      <path d="M549 256h7v3h-7zM614 290h9v4h-9zM622 294h6v63h-6zM682 324h5v30h-5zM634 255h6v3h-6z" />
      <path d="M400 271h4v62h-4zM420 281h4v63h-4z" />
      {Array.from({ length: 12 }, (_, i) => (
        <rect key={i} x={425 + i * 6.7} y={257 + i * 3.4} width={i === 11 ? 5 : 4} height={63} />
      ))}
    </g>
    <path d="M644 260l56 28" stroke="#5b2a90" strokeWidth="1" strokeDasharray="5 3" />
    <path d="M426 320l78 38h196" fill="none" stroke="#a06a22" />
    <path d="M596 327h20v30h-20z" fill="#ac6fc9" />
    <path d="M608 328h6v26h-6z" fill="#c99bb0" />
    <path d="M600 328v28M604 328v28" stroke="#8a4cc0" />
    <path d="M597 346h8M597 349h11M597 352h12" stroke="#5b3aa0" />

    <g fill="none" stroke="#9c9c9c" strokeWidth="1">
      <circle cx="492" cy="271" r="165" />
      <circle cx="492" cy="107" r="17" />
      <circle cx="492" cy="436" r="17" />
      <circle cx="327" cy="271" r="17" />
      <circle cx="659" cy="271" r="17" />
    </g>

    <g fill="#eef0ea" textAnchor="middle">
      {Array.from({ length: 12 }, (_, i) => (
        <text key={i} x={306 + i * 6.6} y={324 + i * 3.4}>{i + 1}</text>
      ))}
      <text x="361" y="316">A</text>
      <text x="415" y="316">B</text>
      <text x="398" y="321">3900</text>
      <text x="343" y="322">33</text>
      <text x="360" y="342">39800</text>
      <text x="419" y="363">00</text>
      <text x="462" y="369">A</text>
      <text x="479" y="363">3900</text>
      <text x="516" y="368">B</text>
      <text x="540" y="363">4800</text>
      <text x="582" y="363">1500</text>
      <text x="586" y="364">1200</text>
      <text x="582" y="368">C</text>
      <text x="603" y="368">D</text>
      <text x="610" y="363">2400</text>
      <text x="637" y="363">1500</text>
      <text x="637" y="368">E</text>
      <text x="657" y="367">F</text>
      <text x="679" y="363">4600</text>
      <text x="694" y="362">180</text>
    </g>

    <path d="M312 415v-14" stroke="#1a1ae8" strokeWidth="2" />
    <path d="M312 399l-3 6h6z" fill="#1a1ae8" />
    <path d="M315 417h8" stroke="#12c030" strokeWidth="2" />
    <path d="M329 417l-7-3v6z" fill="#12c030" />
    <circle cx="312" cy="417" r="3" fill="#e02020" />
    <text x="309" y="399" fill="#1a1ae8">Z</text>
    <text x="329" y="420" fill="#12c030">Y</text>
    <path d="M518 260v9M513 264h10M515 262h6v5h-6z" stroke="#fff" fill="none" />
  </Canvas>
);

/* ---------- status and task bars ---------- */

const Status = styled.footer`
  flex: none;
  display: flex;
  align-items: center;
  height: 16px;
  padding: 0 7px 0 1px;
  background: #dcdde0;
  color: #444;
`;
const StatusText = styled.span<{ $width?: number }>`
  width: ${p => (p.$width ? `${p.$width}px` : 'auto')};
`;
const StatusButton = styled.button<{ $width: number; $on?: boolean }>`
  display: flex;
  align-items: center;
  justify-content: center;
  gap: 1px;
  width: ${p => p.$width}px;
  height: 13px;
  margin-right: 2px;
  border: 1px solid ${p => (p.$on ? '#5aa4ec' : '#c6c8cb')};
  background: ${p => (p.$on ? '#fff' : '#cfd1d4')};
  color: #555;
`;
const Taskbar = styled.nav`
  flex: none;
  display: flex;
  align-items: stretch;
  height: 23px;
  background: #1f1f1f;
  color: #eee;
`;
const TaskButton = styled.button<{ $open?: boolean; $active?: boolean }>`
  display: flex;
  align-items: center;
  justify-content: center;
  width: ${p => (p.$open ? 28 : 27)}px;
  background: ${p => (p.$active ? '#444' : 'transparent')};
  border-bottom: 1px solid ${p => (p.$open ? '#6db5f5' : 'transparent')};
`;
const Tray = styled.div`
  display: flex;
  align-items: center;
  gap: 4px;
  padding-right: 12px;
`;
const Ime = styled.span`
  font-size: 8px;
`;
const Clock = styled.time`
  width: 43px;
  text-align: center;
  line-height: 10px;
`;
const Notice = styled.button`
  position: relative;
`;
const NoticeCount = styled.span`
  position: absolute;
  right: 1px;
  bottom: -1px;
  font-size: 6px;
  color: #fff;
`;

/* ---------- data ---------- */

const ribbonTabs: [string, number][] = [
  ['开始', 28], ['工程设置', 42], ['建模', 28], ['视图', 28], ['工具', 28], ['工程量', 38], ['云应用', 32],
];
const quickIcons = ['newFile', 'open', 'save', 'undo', 'redo', 'sigma', 'stats', 'sheet', 'sheetPale', 'brush', 'grid', 'lockDoc'];

type NavItem = [icon: string, label: string, child?: boolean];
const navItems: NavItem[] = [
  ['folder', '轴线'], ['folder', '柱'], ['folderOpen', '墙'],
  ['shear', '剪力墙(Q)', true], ['frame', '人防门框墙(RF)', true], ['brick', '砌体墙(Q)', true],
  ['rebar', '砌体加筋(Y)', true], ['insul', '保温墙(Q)', true], ['beam', '暗梁(A)', true],
  ['stack', '墙垛(E)', true], ['curtain', '幕墙(Q)', true],
  ['folderOpen', '门窗洞'],
  ['door', '门(M)', true], ['window', '窗(C)', true], ['doorWin', '门联窗(A)', true],
  ['hole', '墙洞(D)', true], ['band', '带形窗(C)', true], ['bandHole', '带形洞(D)', true],
  ['bay', '飘窗(X)', true], ['dormer', '老虎窗', true], ['lintel', '过梁(G)', true], ['niche', '壁龛(I)', true],
  ['folder', '梁'], ['folder', '板'],
];

type Prop = { n: number; name: string; value?: string; kind?: 'plain' | 'active' | 'off' | 'group'; check?: boolean };
const props: Prop[] = [
  { n: 1, name: '名称', value: 'D-1' },
  { n: 2, name: '洞口宽度(mm)', value: '1800', check: true },
  { n: 3, name: '洞口高度(mm)', value: '2100', check: true },
  { n: 4, name: '离地高度(mm)', value: '0', kind: 'active', check: true },
  { n: 5, name: '洞口每侧加强筋', check: true },
  { n: 6, name: '斜加筋', check: true },
  { n: 7, name: '加强暗梁高度(...', check: true },
  { n: 8, name: '加强暗梁纵筋', check: true },
  { n: 9, name: '加强暗梁箍筋', check: true },
  { n: 10, name: '洞口面积(m²)', value: '3.78', kind: 'off', check: true },
  { n: 11, name: '是否随墙变斜', value: '是', kind: 'plain', check: true },
  { n: 12, name: '备注', kind: 'plain', check: true },
  { n: 13, name: '钢筋业务属性', kind: 'group' },
  { n: 16, name: '土建业务属性', kind: 'group' },
];

type Layer = [name: string, state: 0 | 1 | 2, group?: boolean];
const layers: Layer[] = [
  ['砌体加筋', 0], ['保温墙', 1], ['暗梁', 0], ['墙垛', 0], ['幕墙', 1],
  ['门窗洞', 2, true], ['门', 1], ['窗', 1], ['门联窗', 1], ['墙洞', 1], ['带形窗', 1], ['带形洞', 1],
  ['飘窗', 0], ['老虎窗', 0], ['过梁', 1], ['壁龛', 0],
  ['梁', 2, true], ['梁', 0], ['连梁', 1], ['圈梁', 0],
  ['板', 0, true], ['现浇板', 0], ['螺旋板', 0], ['柱帽', 0],
];

const viewTools: [string, boolean][] = [
  ['orbit', false], ['twoD', false], ['cubeLit', true], ['cube', true], ['refresh', true], ['tableView', false],
];

/* ---------- sections ---------- */

const AppHeader = () => (
  <Header>
    <Logo viewBox="0 0 17 18" aria-hidden="true">
      <rect width="17" height="18" rx="4" fill="#1c86e4" />
      <path d="M0 9Q9 7 17 12v2q0 4-4 4H4q-4 0-4-4z" fill="#34a4f2" />
      <path d="M3 5h11M8.500 5v10" stroke="#fff" strokeWidth="3" />
    </Logo>
    <div>
      <HeaderRow>
        <QuickTools aria-label="快速访问">
          {quickIcons.map(n => <QuickButton key={n} aria-label={n}><Icon name={n} />{(n === 'undo' || n === 'redo') && <Caret />}</QuickButton>)}
          <Caret />
        </QuickTools>
        <Title>广联达BIM土建计量平台 GTJ2018 - [C:\Users\86151\Desktop\职工宿舍楼.GTJ]</Title>
        <WindowTools><Dash /><Icon name="shirt" size={7} />P...<Avatar /></WindowTools>
      </HeaderRow>
      <HeaderRow>
        <Tabs>
          {ribbonTabs.map(([t, w]) => <RibbonTab key={t} $width={w} $active={t === '建模'}>{t}</RibbonTab>)}
        </Tabs>
        <SearchHelp>
          <HelpInput aria-label="搜索帮助" />
          <Icon name="search" size={7} />
        </SearchHelp>
        <HelpTools>
          <Icon name="headset" /><Icon name="bell" /><Icon name="chat" /><span>?</span>
        </HelpTools>
      </HeaderRow>
    </div>
    <StartButton>Start</StartButton>
  </Header>
);

const AppRibbon = () => (
  <Ribbon>
    <Group $width={82}>
      <GroupBody $pad={3}>
        <BigTool $width={26}><Icon name="bigSelect" size={17} />选择</BigTool>
        <ToolStack width={52} items={[['picker', '拾取构件'], ['batch', '批量选择'], ['prop', '按属性选择']]} />
      </GroupBody>
      <GroupName>选择 <Caret /></GroupName>
    </Group>
    <Group $width={109}>
      <GroupBody $pad={5}>
        <ToolStack width={44} items={[['find', '查找替换'], ['scale', '设置比例'], ['restore', '还原CAD']]} />
        <ToolStack width={56} items={[['floors', '识别楼层表'], ['option', 'CAD识别选项']]} />
      </GroupBody>
      <GroupName>CAD操作 <Caret /></GroupName>
    </Group>
    <Group $width={156}>
      <GroupBody $pad={5}>
        <ToolStack width={36} items={[['define', '定义'], ['cloud', '云检查'], ['lock', '锁定', 'v']]} />
        <ToolStack width={63} items={[['copyLayer', '复制到其它层', 'v'], ['align', '自动平齐板', 'mv'], ['axis', '两点辅轴', 'v']]} />
        <ToolStack width={48} items={[['length', '长度标注', 'v'], ['store', '图元存盘', 'v'], ['filter', '图元过滤', 'm']]} />
      </GroupBody>
      <GroupName>通用操作 <Caret /></GroupName>
    </Group>
    <Group $width={132}>
      <GroupBody $pad={4}>
        <ToolStack width={31} items={[['copy', '复制'], ['move', '移动'], ['mirror', '镜像']]} />
        <ToolStack width={30} items={[['extend', '延伸', 'm'], ['trim', '修剪', 'm'], ['offset', '偏移', 'm']]} />
        <ToolStack width={31} items={[['breakIt', '打断', 'm'], ['merge', '合并', 'm'], ['split', '分割', 'm']]} />
        <ToolStack width={34} items={[['alignTo', '对齐', 'mv'], ['brushDark', '删除'], ['rotate', '旋转']]} />
      </GroupBody>
      <GroupName>修改 <Caret /></GroupName>
    </Group>
    <Group $width={67}>
      <GroupBody $pad={3}>
        <BigTool $width={24}><Icon name="point" size={17} />点</BigTool>
        <BigTool $width={24} $muted><Icon name="line" size={17} />直线</BigTool>
        <ToolStack width={14} items={[['arc', '', 'm'], ['circle', '', 'm'], ['rect', '', 'm']]} />
      </GroupBody>
      <GroupName>绘图 <Caret /></GroupName>
    </Group>
    <Group $width={119}>
      <GroupBody $pad={5}>
        <BigTool $width={38}><Icon name="doorTable" size={17} />识别门窗表</BigTool>
        <BigTool $width={38}><Icon name="doorHole" size={17} />识别门窗洞</BigTool>
        <BigTool $width={34}><Icon name="doorHole" size={17} />校核门窗</BigTool>
      </GroupBody>
      <GroupName>识别墙洞</GroupName>
    </Group>
    <Group $width={79}>
      <GroupBody $pad={2}>
        <BigTool $width={30}><Icon name="smart" size={17} />智能布置<Caret /></BigTool>
        <ToolStack width={44} items={[['exact', '精确布置']]} />
      </GroupBody>
      <GroupName>墙洞二次编辑</GroupName>
    </Group>
  </Ribbon>
);

const NavPanel = () => (
  <NavColumn>
    <PanelTitle $height={11}>导航树</PanelTitle>
    <NavTools>
      <Icon name="jump" size={8} />
      <Spacer />
      <SquareButton aria-label="列表"><Icon name="list" /></SquareButton>
      <SquareButton aria-label="卡片"><Icon name="cards" /></SquareButton>
    </NavTools>
    <Scroll>
      <Tree>
        {navItems.map(([icon, label, child]) => (
          <TreeRow key={label} $child={child} $selected={label === '墙洞(D)'}>
            <Icon name={icon} />{label}
          </TreeRow>
        ))}
      </Tree>
      <ScrollTrack><Thumb $top={5} $height={71} /></ScrollTrack>
    </Scroll>
  </NavColumn>
);

const valueTone = (p: Prop) => (p.kind === 'off' || p.kind === 'group' ? 'off' : undefined);

const MiddlePanels = () => (
  <MiddleColumn>
    <Card $grow={155}>
      <Grip>×</Grip>
      <PanelTabs $height={12}>
        <PanelTab $width={36} $active>构件列表</PanelTab>
        <PanelTab $width={37}>图纸管理</PanelTab>
      </PanelTabs>
      <ListTools>
        <Tool><Icon name="add" />新建<Caret /></Tool>
        <Tool><Icon name="dup" />复制</Tool>
        <Tool><Icon name="del" />删除</Tool>
        <Tool><Icon name="layerCopy" />层间复制</Tool>
        <Spacer />
        <MoreButton aria-label="更多">»</MoreButton>
      </ListTools>
      <SearchRow>
        <SearchInput placeholder="搜索构件..." aria-label="搜索构件" />
        <Icon name="search" size={7} />
      </SearchRow>
      <Parts>
        <Part $indent={5}><Expander />墙洞</Part>
        <Part $indent={22}><Chosen>D-1</Chosen></Part>
      </Parts>
    </Card>
    <Card $grow={194}>
      <Grip>×</Grip>
      <PanelTabs $height={13}>
        <PanelTab $width={36} $active>属性列表</PanelTab>
        <PanelTab $width={37}>图层管理</PanelTab>
      </PanelTabs>
      <Scroll>
        <Table $extra={1}>
          <colgroup><col width="12" /><col width="56" /><col width="59" /><col width="24" /></colgroup>
          <thead><tr><Th /><Th>属性名称</Th><Th $blue>属性值</Th><Th>附加</Th></tr></thead>
          <tbody>
            {props.map(p => (
              <tr key={p.n}>
                <Td $tone={p.kind === 'active' ? 'active' : 'head'}>{p.n}</Td>
                <Td $tone={!p.kind || p.kind === 'off' ? 'link' : 'plain'}>
                  {p.kind === 'group' && <PlusBox aria-label="展开">+</PlusBox>}{p.name}
                </Td>
                <Td $tone={valueTone(p)}>
                  {p.kind !== 'group' && (
                    <ValueInput aria-label={p.name} defaultValue={p.value} $boxed={p.kind === 'active'} readOnly={p.kind === 'off'} />
                  )}
                </Td>
                <CheckCell>{p.check && <Check type="checkbox" aria-label={`附加 ${p.name}`} />}</CheckCell>
              </tr>
            ))}
          </tbody>
        </Table>
        <ScrollTrack $arrows><Thumb $top={3} $height={81} /></ScrollTrack>
      </Scroll>
    </Card>
  </MiddleColumn>
);

const DisplayPanel = () => (
  <RightColumn>
    <Grip>×</Grip>
    <PanelTitle $height={16}>显示设置</PanelTitle>
    <PanelTabs $height={15}>
      <PanelTab $width={35} $active $accent>图元显示</PanelTab>
      <PanelTab $width={34}>楼层显示</PanelTab>
    </PanelTabs>
    <TableArea>
      <Table $extra={4}>
        <colgroup><col width="76" /><col width="35" /><col width="35" /></colgroup>
        <thead><tr><Th>图层构件</Th><Th>显示图元</Th><Th>显示名称</Th></tr></thead>
        <tbody>
          {layers.map(([name, state, group], i) => (
            <tr key={i}>
              <LayerName $child={!group}>{group && <PlusBox aria-label="折叠">-</PlusBox>}{name}</LayerName>
              <CheckCell><Check type="checkbox" aria-label={`显示图元 ${name}`} defaultChecked={state === 1} $partial={state === 2} /></CheckCell>
              <CheckCell><Check type="checkbox" aria-label={`显示名称 ${name}`} /></CheckCell>
            </tr>
          ))}
        </tbody>
      </Table>
      <ScrollTrack $arrows><Thumb $top={13} $height={23} /></ScrollTrack>
    </TableArea>
    <PanelFoot><FootButton>恢复默认设置</FootButton></PanelFoot>
    <Ball>06:16</Ball>
  </RightColumn>
);

const App = () => (
  <Page>
    <GlobalStyle />
    <AppHeader />
    <AppRibbon />
    <SelectorBar>
      {['首层', '门窗洞', '墙洞', 'D-1', '分层1'].map(v => (
        <SelectBox key={v}><Select aria-label={v}><option>{v}</option></Select></SelectBox>
      ))}
    </SelectorBar>
    <Main>
      <NavPanel />
      <MiddlePanels />
      <Viewport>
        <Scene />
        <CollapseHandle $side="left" aria-label="收起左侧" />
        <CollapseHandle $side="right" aria-label="收起右侧" />
        <ViewTools>
          {viewTools.map(([n, menu]) => <ViewButton key={n} $menu={menu} aria-label={n}><Icon name={n} size={13} /></ViewButton>)}
        </ViewTools>
      </Viewport>
      <DisplayPanel />
    </Main>
    <Status>
      <StatusText $width={148}>X = 812775 Y = -97162 Z = 59359</StatusText>
      <StatusText $width={23}>层高:</StatusText>
      <StatusText $width={24}>4.5</StatusText>
      <StatusText $width={22}>标高:</StatusText>
      <StatusText $width={52}>0~4.5</StatusText>
      <StatusText $width={58}>0</StatusText>
      <StatusText $width={20}>隐藏:</StatusText>
      <StatusText $width={38}>0</StatusText>
      <StatusButton $width={15} aria-label="正交"><Icon name="corner" /></StatusButton>
      <StatusButton $width={20} $on aria-label="捕捉"><Icon name="square" /><Caret /></StatusButton>
      <StatusButton $width={16} aria-label="交点"><Icon name="cross" /></StatusButton>
      <StatusButton $width={20} aria-label="角度"><Icon name="angle" /><Caret /></StatusButton>
      <StatusButton $width={20} aria-label="偏移"><Icon name="plusMinus" /><Caret /></StatusButton>
      <StatusButton $width={40}>跨图层选择</StatusButton>
      <StatusButton $width={35}>折线选择</StatusButton>
      <StatusText>按鼠标左键指定第一个角点，或拾取构件图元</StatusText>
      <Spacer />
      <StatusText>166.667 FPS</StatusText>
    </Status>
    <Taskbar>
      <TaskButton aria-label="开始"><Icon name="windows" /></TaskButton>
      <TaskButton aria-label="搜索"><Icon name="lens" size={10} /></TaskButton>
      <TaskButton aria-label="Cortana"><Icon name="ring" size={11} /></TaskButton>
      <TaskButton aria-label="任务视图"><Icon name="taskView" size={10} /></TaskButton>
      <TaskButton $open aria-label="地图"><Icon name="map" size={14} /></TaskButton>
      <TaskButton $open $active aria-label="GTJ"><Icon name="appT" size={14} /></TaskButton>
      <TaskButton $open aria-label="录屏"><Icon name="recorder" size={14} /></TaskButton>
      <Spacer />
      <Tray>
        <Icon name="usb" /><Icon name="chevron" /><Icon name="fox" size={10} /><Icon name="battery" size={10} />
        <Icon name="wifi" /><Icon name="speaker" size={10} /><Ime>中</Ime>
        <Clock>23:13<br />2019/11/15</Clock>
        <Notice aria-label="通知"><Icon name="notify" size={12} /><NoticeCount>3</NoticeCount></Notice>
      </Tray>
    </Taskbar>
  </Page>
);

export default App;
